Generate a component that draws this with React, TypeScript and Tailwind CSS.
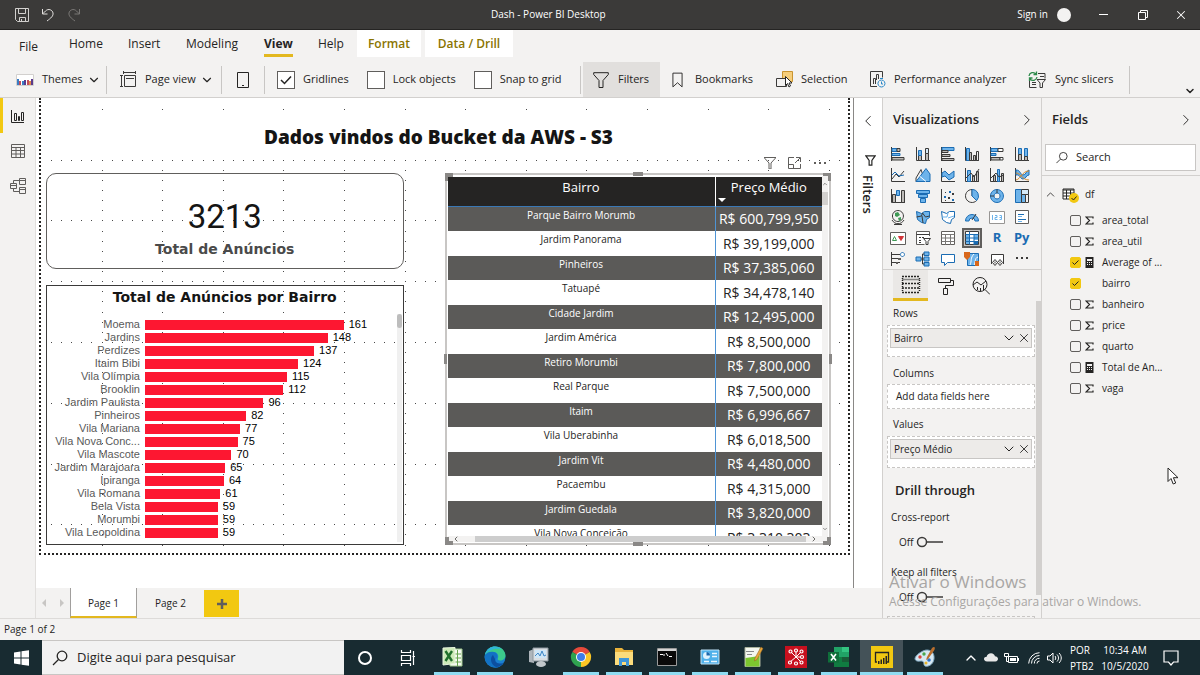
import React from 'react';
import { ChevronDown, ChevronLeft, ChevronRight, ChevronUp, X } from 'lucide-react';

// [path, fill, stroke]
type Stroke = [string, string, string];

interface GlyphProps {
  parts: Stroke[];
  className?: string;
}

const K = '#3b3a39';
const B = '#6db3ea';
const D = '#1b6cb3';
const G = '#bdbbb8';
const N = 'none';

const Glyph: React.FC<GlyphProps> = ({ parts, className = 'size-4' }) => (
  <svg viewBox="0 0 16 16" className={className} aria-hidden="true">
    {parts.map(([d, fill, stroke], i) => (
      <path key={i} d={d} fill={fill} stroke={stroke} />
    ))}
  </svg>
);

const visuals: { name: string; parts: Stroke[] }[] = [
  { name: 'Stacked bar chart', parts: [['M1.5 1v14', N, K], ['M2 2.500h5v3h-5z', B, D], ['M7 2.500h3v3h-3z', G, K], ['M2 7.500h8v2h-8z', B, D], ['M2 11.500h12v2.500h-12z', G, K]] },
  { name: 'Stacked column chart', parts: [['M1.500 1v13.500h13.500', N, K], ['M3.500 9.500h3v5h-3z', G, K], ['M3.500 4.500h3v5h-3z', B, D], ['M10.500 7.500h3v7h-3z', G, K], ['M10.500 2.500h3v5h-3z', '#d6eaf8', K]] },
  { name: 'Clustered bar chart', parts: [['M1.500 1v14', N, K], ['M2 1.500h12v3h-12z', B, D], ['M2 4.500h6v2h-6z', G, K], ['M2 8.500h8v2h-8z', G, K], ['M2 12.500h12v2h-12z', G, K]] },
  { name: 'Clustered column chart', parts: [['M1.500 1v13.500h13.500', N, K], ['M2.500 2.500h3v12h-3z', B, D], ['M5.500 6.500h2v8h-2z', G, K], ['M9.500 9.500h2v5h-2z', G, K], ['M12.500 5.500h2v9h-2z', '#f3f2f1', K]] },
  { name: '100% stacked bar chart', parts: [['M1.500 1v14', N, K], ['M2 2.500h7v3h-7z', B, D], ['M9 2.500h5v3h-5z', '#fff', K], ['M2 7.500h5v2h-5z', B, D], ['M2 11.500h9v2.500h-9z', G, K], ['M11 11.500h3v2.500h-3z', '#fff', K]] },
  { name: '100% stacked column chart', parts: [['M1.500 1v13.500h13.500', N, K], ['M4.500 2.500h3v6h-3z', B, D], ['M4.500 8.500h3v6h-3z', G, K], ['M10.500 2.500h3v8h-3z', B, D], ['M10.500 10.500h3v4h-3z', G, K]] },
  { name: 'Line chart', parts: [['M1.500 1v13.500h13.500', N, K], ['M2 12l4-5 3 3 5-6', N, K], ['M2 8l3-3 4 4 5-1', N, D]] },
  { name: 'Area chart', parts: [['M1 11l5-8.500 4 12h-9z', '#f3f2f1', K], ['M15 14.500V7l-4-5.500-6 8-4 5z', B, D], ['M5 9.500l6 5', N, '#fff']] },
  { name: 'Stacked area chart', parts: [['M1.500 1v13.500h13.500', N, K], ['M2 6l3-2 4 4 5-4v6l-5 3-4-4-3 1z', B, D]] },
  { name: 'Line and stacked column chart', parts: [['M1.500 1v13.500h13.500', N, K], ['M3.500 3.500h3v11h-3z', B, D], ['M8.500 8.500h2v6h-2z', G, K], ['M12.500 4.500h2v10h-2z', G, K], ['M2 11l5-5 3 4 5-8', N, K]] },
  { name: 'Line and clustered column chart', parts: [['M1.500 1v13.500h13.500', N, K], ['M4.500 8.500h2v6h-2z', G, K], ['M8.500 2.500h2v12h-2z', B, D], ['M12.500 6.500h2v8h-2z', G, K], ['M2 11l5-5 3 4 5-2', N, K]] },
  { name: 'Ribbon chart', parts: [['M1.500 1v13.500h13.500', N, K], ['M2 3c5 0 4 5 7 5s3-4 6-5v5c-3 0-3 4-6 4s-3-5-7-4z', B, D], ['M2 13c5-1 6-9 13-9M2 6c5 0 6 7 13 7', N, '#d98a2b']] },
  { name: 'Waterfall chart', parts: [['M1.500 1v13.500h13.500', N, K], ['M2.500 6.500h3v8h-3z', G, K], ['M6.500 2.500h3v5h-3z', B, D], ['M11.500 2.500h3v12h-3z', G, K]] },
  { name: 'Funnel', parts: [['M1.500 2.500h13v3h-13z', B, D], ['M3.500 6.500h9v3h-9z', B, D], ['M5.500 10.500h5v4h-5z', B, D]] },
  { name: 'Scatter chart', parts: [['M1.500 1v13.500h13.500', N, K], ['M4 8h2v2h-2zM9 3h2v2h-2zM12 11h2v2h-2z', D, N], ['M5 4h1v1h-1zM8 9h2v2h-2zM12 5h2v2h-2zM5 12h1v1h-1z', K, N]] },
  { name: 'Pie chart', parts: [['M8 1.500a6.500 6.500 0 1 0 4.600 11.100L8 8z', '#f3f2f1', K], ['M8 1.500a6.500 6.500 0 0 1 4.600 11.100L8 8z', B, D]] },
  { name: 'Donut chart', parts: [['M8 1.500a6.500 6.500 0 1 1-.1 0zM8 5a3 3 0 1 0 .1 0z', B, D], ['M1.500 8h3.500M8 1.500v3.500', N, K]] },
  { name: 'Treemap', parts: [['M1.500 1.500h6v13h-6z', B, D], ['M7.500 1.500h7v5h-7z', '#d6eaf8', K], ['M7.500 6.500h4v8h-4z', B, K], ['M11.500 6.500h3v8h-3z', '#f3f2f1', K]] },
  { name: 'Map', parts: [['M8 1.500a5.500 5.500 0 1 1-.1 0z', '#f3f2f1', K], ['M5 4l3-1 2 3-3 2-2-1zM8 9l3-1 0 3-2 1z', '#3f9a55', N], ['M2 11c3 5 9 5 12 0M8 14v1.500M4 15.500h8', N, K]] },
  { name: 'Filled map', parts: [['M1.500 2.500l5 2 3-2 5 0v6l-3 2-1 4-4-1-4-3z', B, D], ['M1.500 8l5-1 1-3 3 4 4-1M7 7l1 7', N, K]] },
  { name: 'Shape map', parts: [['M1.500 2.500l5 2 3-2 5 0v6l-3 2-1 4-4-1-4-3z', '#fff', D], ['M2 8h5l1-4M8 9l6-2', N, B]] },
  { name: 'Gauge', parts: [['M1.500 12a6.500 6.500 0 0 1 13 0h-3.500a3 3 0 0 0-6 0z', B, D], ['M8 11l4-6', N, K]] },
  { name: 'Card', parts: [['M.5 2.500h15v12h-15z', '#fff', '#979593'], ['M3.500 6v5M6 6.500h2v2h-2v2h2.500M10.500 6.500h2v4h-2M10.500 8.500h2', N, B]] },
  { name: 'Multi-row card', parts: [['M1.500 1.500h13v13h-13z', '#fff', '#605e5c'], ['M4 5.500h6M4 10.500h8', N, D], ['M4 7.500h4M4 12.500h4', N, B]] },
  { name: 'KPI', parts: [['M.5 2.500h15v12h-15z', '#fff', '#605e5c'], ['M2.500 10.500l2-4 2 4z', N, '#3f9a55'], ['M8.500 6.500h5l-2.500 4z', '#d13438', '#d13438']] },
  { name: 'Slicer', parts: [['M14.500 6v-4.500h-13v13h8', '#fff', '#605e5c'], ['M1.500 4.500h13M4 7.500h2M7 7.500h2M4 10.500h2M4 12.500h2', N, K], ['M8.500 8.500h7l-2.500 3v3h-2v-3z', '#fff', K]] },
  { name: 'Table', parts: [['M1.500 1.500h13v13h-13z', '#fff', '#605e5c'], ['M1.500 4.500h13M1.500 8h13M1.500 11.500h13M5.500 4v11M10.500 4v11', N, '#797775']] },
  { name: 'Matrix', parts: [['M1.500 1.500h13v13h-13z', '#fff', K], ['M2 5h3v9h-3zM10 5h4v5h-4z', B, N], ['M10 11h4v3.500h-4z', D, N], ['M1.500 4.500h13M1.500 8h13M1.500 11.500h13M5.500 1.500v13M10 4v11', N, D]] },
  { name: 'R script visual', parts: [] },
  { name: 'Python visual', parts: [] },
  { name: 'Key influencers', parts: [['M1.500 1v14M2 3.500h8M2 7.500h6M2 11.500h5M10 11.500h-3', N, K], ['M12.500 1.500a2 2 0 1 1-.1 0z', '#fff', D], ['M8 7h3v2h-3zM6 11h2v2h-2z', '#605e5c', N]] },
  { name: 'Decomposition tree', parts: [['M1 6h5v4h-5zM9 1h5v3.500h-5zM9 6h5v4h-5zM9 11.500h5v3.500h-5z', B, D], ['M6 8h3M7.500 3v10M7.500 3h2M7.500 13h2', N, K]] },
  { name: 'Q&A', parts: [['M1.500 3.500h13v8h-7l-3 3v-3h-3z', '#fff', D]] },
  { name: 'ArcGIS map', parts: [['M3.500 2.500h11v12h-11z', B, D], ['M6 14c2-4 0-7 4-11M14 6c-4 1-2 6-4 8', N, '#fff'], ['M0 1h6v5l-3 3-3-3zM11 10h4v5h-4z', '#d8671b', N]] },
  { name: 'Power Apps', parts: [['M2.500 13v-9.500h12v9.500', '#fff', K], ['M6 8.500l2.500 3-2.500 3-2.500-3zM11 8.500l2.500 3-2.500 3-2.500-3z', N, K], ['M6 10.500v2M11 10.500v2', N, K]] },
  { name: 'More visuals', parts: [['M2 6h2v2h-2zM7 6h2v2h-2zM12 6h2v2h-2z', K, N]] },
];

const neighbourhoods: [string, number][] = [
  ['Moema', 161], ['Jardins', 148], ['Perdizes', 137], ['Itaim Bibi', 124], ['Vila Olímpia', 115],
  ['Brooklin', 112], ['Jardim Paulista', 96], ['Pinheiros', 82], ['Vila Mariana', 77], ['Vila Nova Conc...', 75],
  ['Vila Mascote', 70], ['Jardim Marajoara', 65], ['Ipiranga', 64], ['Vila Romana', 61], ['Bela Vista', 59],
  ['Morumbi', 59], ['Vila Leopoldina', 59],
];

const prices: [string, string][] = [
  ['Parque Bairro Morumb', 'R$ 600,799,950'],
  ['Jardim Panorama', 'R$ 39,199,000'],
  ['Pinheiros', 'R$ 37,385,060'],
  ['Tatuapé', 'R$ 34,478,140'],
  ['Cidade Jardim', 'R$ 12,495,000'],
  ['Jardim América', 'R$ 8,500,000'],
  ['Retiro Morumbi', 'R$ 7,800,000'],
  ['Real Parque', 'R$ 7,500,000'],
  ['Itaim', 'R$ 6,996,667'],
  ['Vila Uberabinha', 'R$ 6,018,500'],
  ['Jardim Vit', 'R$ 4,480,000'],
  ['Pacaembu', 'R$ 4,315,000'],
  ['Jardim Guedala', 'R$ 3,820,000'],
  ['Vila Nova Conceição', 'R$ 3,310,303'],
];

const fields: { name: string; kind: 'sum' | 'calc' | 'none'; on?: boolean }[] = [
  { name: 'area_total', kind: 'sum' },
  { name: 'area_util', kind: 'sum' },
  { name: 'Average of ...', kind: 'calc', on: true },
  { name: 'bairro', kind: 'none', on: true },
  { name: 'banheiro', kind: 'sum' },
  { name: 'price', kind: 'sum' },
  { name: 'quarto', kind: 'sum' },
  { name: 'Total de An...', kind: 'calc' },
  { name: 'vaga', kind: 'sum' },
];

const TitleBar = () => (
  <header className="relative flex h-[30px] shrink-0 items-center justify-between border-b border-[#252423] bg-[#3b3a39] text-[10px] text-white">
    <div className="flex items-center gap-3 pl-[15px]">
      <button aria-label="Save">
        <svg viewBox="0 0 14 14" className="size-3.5" fill="none" stroke="#d2d0ce">
          <path d="M.5.5h13v13h-11l-2-2zM3.500.5v5h7v-5M4.500 13.500v-4h6v4M6.500 11v2" />
        </svg>
      </button>
      <button aria-label="Undo">
        <svg viewBox="0 0 14 14" className="size-3.5" fill="none" stroke="#e1dfdd">
          <path d="M1.500 1v5h5M1.500 6l3-3c3-3 7-1 7.500 2s-2 5-6 8" />
        </svg>
      </button>
      <button aria-label="Redo">
        <svg viewBox="0 0 14 14" className="size-3.5" fill="none" stroke="#797775">
          <path d="M12.500 1v5h-5M12.500 6l-3-3c-3-3-7-1-7.500 2s2 5 6 8" />
        </svg>
      </button>
    </div>
    <h1 className="absolute left-[491px]">Dash - Power BI Desktop</h1>
    <div className="flex items-center">
      <button className="flex items-center gap-[9px]">
        Sign in
        <span className="size-3.5 rounded-full bg-[#f3f2f1]" />
      </button>
      <button aria-label="Minimize" className="flex w-[59px] justify-center pl-[5px]">
        <span className="h-px w-[9px] bg-white" />
      </button>
      <button aria-label="Restore" className="flex w-[26px] justify-center">
        <svg viewBox="0 0 10 10" className="size-2.5" fill="none" stroke="#fff">
          <path d="M.5 2.500h7v7h-7zM2.500 2.500v-2h7v7h-2" />
        </svg>
      </button>
      <button aria-label="Close" className="mr-[6px] flex w-[38px] justify-center pl-[11px]">
        <X size={14} strokeWidth={1.75} />
      </button>
    </div>
  </header>
);

const MenuTabs = () => (
  <nav className="flex h-8 shrink-0 items-start text-[12px] leading-[28px]">
    <a href="#file" className="w-[69px] pt-[3px] pl-[19px]">File</a>
    <a href="#home" className="w-[59px]">Home</a>
    <a href="#insert" className="w-[58px]">Insert</a>
    <a href="#modeling" className="w-[78px]">Modeling</a>
    <a href="#view" className="w-[54px] font-bold">
      <span className="inline-block h-[27px] border-b-[3px] border-[#e3b81f]">View</span>
    </a>
    <a href="#help" className="w-[39px]">Help</a>
    <a href="#format" className="mr-1 h-[27px] w-16 bg-white text-center font-semibold text-[#8a7400]">Format</a>
    <a href="#drill" className="h-[27px] w-[88px] bg-white text-center font-semibold text-[#8a7400]">Data / Drill</a>
  </nav>
);

const RibbonCheck: React.FC<{ label: string; checked?: boolean }> = ({ label, checked }) => (
  <label className="flex items-center gap-2 whitespace-nowrap">
    <span className="relative size-[18px]">
      <input type="checkbox" defaultChecked={checked} className="peer block size-[18px] appearance-none border border-[#605e5c] bg-white" />
      <svg viewBox="0 0 18 18" className="absolute inset-0 hidden size-[18px] peer-checked:block" fill="none" stroke="#252423">
        <path d="M4 9l3.500 3.500L14 5.500" strokeWidth="1.500" />
      </svg>
    </span>
    {label}
  </label>
);

const Ribbon = () => (
  <div className="relative flex h-9 shrink-0 items-center border-b border-[#d2d0ce] text-[11px] text-[#252423]">
    <button className="flex h-7 w-[107px] items-center border-r border-[#c8c6c4] pl-4">
      <svg viewBox="0 0 18 12" className="mr-2 h-3 w-[18px]">
        <path d="M.5.500h17v11h-17z" fill="#fff" stroke="#d2d0ce" />
        <path d="M1 5h2v6H1zM6 7h2v4H6z" fill="#3b7dc4" />
        <path d="M3 7h2v4H3zM11 6h2v5h-2z" fill="#c24d5c" />
        <path d="M8 6h2v5H8zM15 5h2v6h-2z" fill="#5b3b8c" />
        <path d="M13 7h2v4h-2z" fill="#e08a4c" />
      </svg>
      Themes
      <ChevronDown size={14} strokeWidth={2} className="ml-1" />
    </button>
    <button className="flex h-7 w-[115px] items-center border-r border-[#c8c6c4] pl-[13px]">
      <svg viewBox="0 0 17 17" className="mr-2 size-[17px]" fill="none" stroke="#3b3a39">
        <path d="M4.500 4.500h11v11h-11zM6 7.500h8M3 1.500h13M3.500 0v3M15.500 0v3M1.500 4v12M0 4.500h3M0 15.500h3" />
      </svg>
      Page view
      <ChevronDown size={14} strokeWidth={2} className="ml-1" />
    </button>
    <button aria-label="Mobile layout" className="flex h-7 w-[43px] items-center justify-center border-r border-[#c8c6c4]">
      <svg viewBox="0 0 12 16" className="h-4 w-3" fill="none" stroke="#252423">
        <path d="M.5.500h11v15H.5zM5 13.500h2" />
      </svg>
    </button>
    <div className="flex h-7 w-[316px] items-center gap-[18px] border-r border-[#c8c6c4] pl-3">
      <RibbonCheck label="Gridlines" checked />
      <RibbonCheck label="Lock objects" />
      <RibbonCheck label="Snap to grid" />
    </div>
    <button className="ml-[2px] flex h-[35px] w-[77px] items-center bg-[#e1dfdd] pl-[10px]">
      <svg viewBox="0 0 16 16" className="mr-[9px] size-4" fill="none" stroke="#252423">
        <path d="M.7.7h14.600v1.800L10 8.500v7H6v-7L.7 2.500z" />
      </svg>
      Filters
    </button>
    <button className="flex w-[116px] items-center pl-3">
      <svg viewBox="0 0 12 16" className="mr-3 h-4 w-[11px]" fill="none" stroke="#252423">
        <path d="M1 .5h10v15l-5-4.500-5 4.500z" />
      </svg>
      Bookmarks
    </button>
    <button className="flex w-[94px] items-center">
      <svg viewBox="0 0 17 17" className="mr-2 size-[17px]">
        <path d="M6.500.500h10v10h-10z" fill="#f6ce7a" stroke="#c99430" />
        <path d="M.5 7.500h10v8H.5z" fill="#f3f2f1" stroke="#3b3a39" />
        <path d="M9.500 5.500v9l2-2 1.500 3.500 1.500-1-1.500-3h3z" fill="#fff" stroke="#252423" />
      </svg>
      Selection
    </button>
    <button className="flex w-[158px] items-center">
      <svg viewBox="0 0 17 17" className="mr-[7px] size-[17px]" fill="none" stroke="#3b3a39">
        <path d="M7 15.500H.5V.500h12v6M3.500 13V7.500h2V13M6.500 9V3.500h2V8" />
        <path d="M11.500 9a3.500 3.500 0 1 1-.1 0M11.500 10.500v2.500h1.500M10 7.500h3" stroke="#2b88c8" />
      </svg>
      Performance analyzer
    </button>
    <button className="flex h-7 w-[102px] items-center border-r border-[#c8c6c4]">
      <svg viewBox="0 0 18 18" className="mr-[9px] size-[18px]" fill="none" stroke="#3b3a39">
        <path d="M10 2.500h7M17 2.500v5M12 5.500h4M1.500 10v6.500h7M4 11.500h4M4 13.500h4M9 8.500h8.500l-3 3.500v4.500h-2.500v-4.500z" />
        <path d="M1 5a4 4 0 0 1 7-2M8.500.5v3H5.500M9 6a4 4 0 0 1-7 2M1.500 10V7h3" stroke="#2d8a4b" strokeWidth="1.300" />
      </svg>
      Sync slicers
    </button>
    <button aria-label="Collapse ribbon" className="absolute right-1 bottom-0">
      <ChevronDown size={12} strokeWidth={3} />
    </button>
  </div>
);

const ViewRail = () => (
  <nav className="flex w-9 shrink-0 flex-col border-r border-[#e1dfdd] text-[#3b3a39]">
    <button aria-label="Report" className="flex h-[35px] items-center border-l-[3px] border-[#f2c811] pl-2">
      <svg viewBox="0 0 14 14" className="size-3.5" fill="none" stroke="#252423">
        <path d="M.5 1v12.500H13M3.500 4.500h2v7h-2zM7.500 7.500h1v4h-1zM10.500 3.500h2v8h-2z" />
      </svg>
    </button>
    <button aria-label="Data" className="flex h-[35px] items-center pl-[11px]">
      <svg viewBox="0 0 14 14" className="size-3.5" fill="none" stroke="#605e5c">
        <path d="M.5.500h13v13H.5zM.5 3.500h13M.5 6.500h13M.5 10h13M5 3.500v10M9.500 3.500v10" />
      </svg>
    </button>
    <button aria-label="Model" className="flex h-[36px] items-center pl-[10px]">
      <svg viewBox="0 0 16 16" className="size-4" fill="none" stroke="#605e5c">
        <path d="M.5 5.500h6v5h-6zM.5 7.500h6M9.500.500h6v6h-6zM9.500 2.500h6M9.500 9.500h6v6h-6zM9.500 11.500h6M3.500 5.500v-3h6M3.500 10.500v3h6" />
      </svg>
    </button>
  </nav>
);

const GridDots = () => {
  const dots: [number, number][] = [];
  for (let m = 0; m <= 43; m++) {
    if (m > 0 && m < 5) continue; // the title box hides these
    for (let n = 0; n <= 78; n++) {
      const onColumn = n % 6 === 5;
      const onRow = m % 6 === 5;
      if (onColumn || onRow) dots.push([Math.round(10 + n * 10.1), Math.round(11 + m * 10.13)]);
    }
  }
  return (
    <svg className="pointer-events-none absolute inset-0 size-full" aria-hidden="true">
      {dots.map(([x, y]) => (
        <rect key={`${x}-${y}`} x={x} y={y} width="1" height="1" fill="#4a4a4a" />
      ))}
    </svg>
  );
};

const BarChart = () => (
  <section className="relative flex h-[260px] flex-col border border-[#3b3a39] font-['Liberation_Sans',sans-serif] text-[11px]">
    <h3 className="h-[32px] pt-[2px] text-center font-['DejaVu_Sans',sans-serif] text-[14px] leading-[18px] font-bold text-[#151515]">
      Total de Anúncios por Bairro
    </h3>
    <div className="flex flex-1">
      <ul className="flex-1">
        {neighbourhoods.map(([name, total]) => (
          <li key={name} className="flex h-[13px] items-center leading-[13px]">
            <span className="w-[93px] shrink-0 text-right whitespace-nowrap text-[#5a5a5a]">{name}</span>
            <span className="ml-[5px] flex flex-1 items-center">
              <span className="h-[10px] shrink-0 bg-[#fd1731]" style={{ width: `${(total / 161) * 79}%` }} />
              <span className="ml-[5px] text-black">{total}</span>
            </span>
          </li>
        ))}
      </ul>
      <div className="mt-[-4px] mr-[1px] mb-[2px] w-[5px] bg-[#f0f0f0]">
        <div className="h-[14px] rounded-sm bg-[#bdbdbd]" />
      </div>
    </div>
  </section>
);

const PriceTable = () => (
  <section className="relative h-[372px] border-[2px] border-[#c8c6c4] bg-white p-[1px]">
    <div className="absolute -top-[18px] right-[2px] flex items-center gap-3 text-[#605e5c]">
      <svg viewBox="0 0 12 12" className="size-3" fill="none" stroke="currentColor"><path d="M0 .5h12L7 6v6H5V6z" /></svg>
      <svg viewBox="0 0 13 12" className="h-3 w-[13px]" fill="none" stroke="currentColor"><path d="M6 .5H.5v11h12V7M.5 7.500h5v4M8 .5h4.500V5M12 1L7 6" /></svg>
      <svg viewBox="0 0 14 12" className="h-3 w-3.5" fill="currentColor"><path d="M1 5h2v2H1zM6 5h2v2H6zM11 5h2v2h-2z" /></svg>
    </div>
    <span className="absolute -top-[2px] -left-[2px] size-2 border-t-4 border-l-4 border-[#8a8886]" />
    <span className="absolute -top-[2px] -right-[2px] size-2 border-t-4 border-r-4 border-[#8a8886]" />
    <span className="absolute -bottom-[2px] -left-[2px] size-2 border-b-4 border-l-4 border-[#8a8886]" />
    <span className="absolute -right-[2px] -bottom-[2px] size-2 border-r-4 border-b-4 border-[#8a8886]" />
    <span className="absolute -top-[3px] left-1/2 h-1 w-[10px] -translate-x-1/2 bg-[#8a8886]" />
    <span className="absolute -bottom-[3px] left-1/2 h-1 w-[10px] -translate-x-1/2 bg-[#8a8886]" />
    <span className="absolute top-1/2 -left-[3px] h-[10px] w-[3px] -translate-y-1/2 bg-[#8a8886]" />
    <span className="absolute top-1/2 -right-[3px] h-[10px] w-[3px] -translate-y-1/2 bg-[#8a8886]" />
    <div className="relative flex h-[360px]">
      <div className="flex-1 overflow-hidden pt-[1px]">
        <table className="w-full table-fixed border-separate border-spacing-0 text-center">
          <thead>
            <tr className="h-[30px] bg-[#252423] align-top text-[13px] leading-[20px] text-white">
              <th className="w-[268px] border-r border-b border-r-white border-b-[#3a78b5] p-0 font-normal">Bairro</th>
              <th className="relative border-b border-[#3a78b5] p-0 font-normal">
                Preço Médio
                <span className="absolute bottom-1 left-[2px] border-x-4 border-t-4 border-x-transparent border-t-white" />
              </th>
            </tr>
          </thead>
          <tbody>
            {prices.map(([name, value], i) => (
              <tr key={name} className={i % 2 ? 'h-[25px] bg-white text-[#252423]' : 'h-[24px] bg-[#5b5a58] text-white'}>
                <td className="border-r border-[#4f94d4] p-0 align-top text-[10px] leading-[17px]">{name}</td>
                <td className="p-0 text-[14px] leading-[24px] whitespace-nowrap">{value}</td>
              </tr>
            ))}
          </tbody>
        </table>
      </div>
      <div className="flex w-[6px] flex-col items-center bg-[#f3f2f1]">
        <ChevronUp size={6} className="my-[5px]" />
        <span className="h-[13px] w-full bg-[#d2d0ce]" />
        <ChevronDown size={6} className="mt-auto mb-1" />
      </div>
    </div>
    <div className="flex h-[6px] items-center bg-[#f3f2f1]">
      <ChevronLeft size={8} className="mx-1" />
      <span className="mr-[4px] ml-[11px] h-full flex-1 bg-[#cdcdcd]" />
      <ChevronRight size={8} className="mr-[10px]" />
    </div>
  </section>
);

const ReportCanvas = () => (
  <main className="min-w-0 flex-1 bg-white px-[3px]">
    <div className="relative border-x-2 border-b-2 border-dotted border-[#252423] pr-[17px] pb-2 pl-[5px]">
      <GridDots />
      <h2 className="relative h-[75px] pt-[26px] text-center text-[19px] leading-[26px] font-extrabold text-[#151515]">
        Dados vindos do Bucket da AWS - S3
      </h2>
      <div className="grid grid-cols-[358fr_387fr] gap-[41px]">
        <div className="flex flex-col gap-4">
          <section className="relative flex h-[96px] flex-col items-center rounded-[10px] border border-[#605e5c] pt-[24px]">
            <p className="font-['Roboto',sans-serif] text-[33px] leading-[38px] text-[#151515]">3213</p>
            <p className="font-['DejaVu_Sans',sans-serif] text-[14px] leading-[26px] font-bold text-[#4a4a4a]">Total de Anúncios</p>
          </section>
          <BarChart />
        </div>
        <PriceTable />
      </div>
    </div>
  </main>
);

const PageTabs = () => (
  <div className="flex h-[30px] shrink-0 text-[10px] leading-[30px]">
    <div className="flex w-[34px] items-center justify-between px-[6px]">
      <span className="border-y-4 border-r-4 border-y-transparent border-r-[#c8c6c4]" />
      <span className="border-y-4 border-l-4 border-y-transparent border-l-[#c8c6c4]" />
    </div>
    <button className="w-[67px] border-x border-b-2 border-x-[#a19f9d] border-b-[#e3b81f] bg-white">Page 1</button>
    <button className="w-[67px]">Page 2</button>
    <button aria-label="New page" className="mt-[2px] flex h-[27px] w-[35px] items-center justify-center bg-[#f2c811] text-[#605e5c]">
      <svg viewBox="0 0 10 10" className="size-2.5" stroke="#605e5c" strokeWidth="2.500"><path d="M5 0v10M0 5h10" /></svg>
    </button>
  </div>
);

const FiltersPane = () => (
  <aside className="flex w-[29px] shrink-0 flex-col items-center border-l border-[#8a8886] bg-white pt-[14px]">
    <ChevronLeft size={18} strokeWidth={1.25} />
    <svg viewBox="0 0 12 12" className="mt-[25px] ml-1 size-[11px]" fill="none" stroke="#252423" strokeWidth="1.300">
      <path d="M1 1h10L7.500 6v5h-3V6z" />
    </svg>
    <h2 className="mt-[9px] text-[13px] leading-[18px] font-semibold [writing-mode:vertical-rl]">Filters</h2>
  </aside>
);

const FieldPill: React.FC<{ label: string }> = ({ label }) => (
  <div className="h-8 border border-dashed border-[#c8c6c4] bg-white px-[2px] pt-[2px]">
    <div className="flex h-5 items-center border border-[#c8c6c4] bg-[#edebe9] pl-[3px]">
      <span className="flex-1">{label}</span>
      <button aria-label={`Options for ${label}`}><ChevronDown size={16} strokeWidth={1.5} /></button>
      <button aria-label={`Remove ${label}`}><X size={14} strokeWidth={1.5} /></button>
    </div>
  </div>
);

const Toggle: React.FC<{ label: string }> = ({ label }) => (
  <label className="block">
    <span className="block leading-[16px]">{label}</span>
    <span className="mt-[9px] flex items-center pl-2 leading-[16px]">
      Off
      <input type="checkbox" role="switch" className="sr-only" />
      <svg viewBox="0 0 28 12" className="ml-[2px] h-3 w-7" fill="none" stroke="#3b3a39" strokeWidth="1.500">
        <circle cx="6" cy="6" r="4.500" />
        <path d="M10.500 6H27" />
      </svg>
    </span>
  </label>
);

const VisualizationsPane = () => (
  <aside className="relative flex w-[159px] shrink-0 flex-col overflow-hidden border-l border-[#d2d0ce] text-[10px] text-[#252423]">
    <div className="flex h-[45px] items-center justify-between pr-[5px] pb-[2px] pl-[10px]">
      <h2 className="text-[13px] font-semibold">Visualizations</h2>
      <ChevronRight size={18} strokeWidth={1.25} />
    </div>
    <div className="grid h-[127px] grid-cols-6 border-b border-[#d2d0ce] pr-[7px] pl-[3px]">
      {visuals.map(({ name, parts }) => (
        <button key={name} aria-label={name} className="flex h-[21px] items-center justify-center">
          {name === 'R script visual' && <span className="text-[13px] font-bold text-[#1b6cb3]">R</span>}
          {name === 'Python visual' && <span className="text-[13px] font-bold text-[#1b6cb3]">Py</span>}
          {parts.length > 0 && (
            <span className={name === 'Matrix' ? 'border-2 border-[#605e5c] bg-[#c8c6c4]' : ''}>
              <Glyph parts={parts} />
            </span>
          )}
        </button>
      ))}
    </div>
    <div className="flex h-[31px] pl-[10px]">
      <button aria-label="Fields" className="flex w-[35px] items-center justify-center border-b-[3px] border-[#e3b81f] bg-[#eae8e6]">
        <svg viewBox="0 0 20 20" className="size-5" fill="none" stroke="#252423" strokeWidth="1.500">
          <path d="M1 2.500h18M1 9.500h18M1 14h18M1 18.500h18" strokeDasharray="2 1" />
          <path d="M1.500 5.500h17M1.500 4v14M18.500 4v14" strokeDasharray="1 1" />
        </svg>
      </button>
      <button aria-label="Format" className="flex w-[36px] items-center justify-center">
        <svg viewBox="0 0 16 18" className="h-[18px] w-4" fill="none" stroke="#252423">
          <path d="M.5 1.500h12v4H.5zM12.500 3.500h3v5h-8v3M5.500 11.500h4v6h-4z" />
        </svg>
      </button>
      <button aria-label="Analytics" className="flex w-[34px] items-center justify-center">
        <svg viewBox="0 0 18 18" className="size-[18px]" fill="none" stroke="#252423">
          <circle cx="8" cy="7.500" r="7" />
          <path d="M13 12.500l5 5M1 8l4-3 4 3 5-4M5.500 10v3M8.500 11v3M11.500 8v5" />
        </svg>
      </button>
    </div>
    <div className="flex-1 overflow-hidden pr-[6px] pl-[4px]">
      <h3 className="pt-1 pb-1 pl-[6px] leading-[16px]">Rows</h3>
      <FieldPill label="Bairro" />
      <h3 className="pt-2 pb-[3px] pl-[6px] leading-[16px]">Columns</h3>
      <div className="h-[25px] border border-dashed border-[#c8c6c4] bg-white pl-2 leading-[23px]">Add data fields here</div>
      <h3 className="pt-[7px] pb-[4px] pl-[6px] leading-[16px]">Values</h3>
      <FieldPill label="Preço Médio" />
      <h2 className="pt-[12px] pb-[9px] pl-2 text-[13px] leading-[20px] font-semibold">Drill through</h2>
      <div className="flex flex-col gap-[14px] pl-1">
        <Toggle label="Cross-report" />
        <Toggle label="Keep all filters" />
      </div>
      <div className="mt-[11px] h-4 border border-dashed border-[#c8c6c4]" />
    </div>
    <span className="absolute top-[203px] right-0 bottom-[23px] w-[5px] bg-[#d2d0ce]" />
  </aside>
);

const FieldsPane = () => (
  <aside className="w-[159px] shrink-0 border-l border-[#d2d0ce] text-[10px] text-[#252423]">
    <div className="flex h-[45px] items-center justify-between pr-[5px] pb-[2px] pl-[10px]">
      <h2 className="text-[13px] font-semibold">Fields</h2>
      <ChevronRight size={18} strokeWidth={1.25} />
    </div>
    <div className="border-b border-[#d2d0ce] pt-px pr-1 pb-[4px] pl-[3px]">
      <label className="flex h-[27px] items-center border border-[#c8c6c4] bg-white pl-[10px]">
        <svg viewBox="0 0 14 14" className="mr-2 size-3.5" fill="none" stroke="#252423">
          <circle cx="8.500" cy="5" r="4.500" />
          <path d="M5 8.500L.5 13" />
        </svg>
        <input aria-label="Search" placeholder="Search" className="w-full min-w-0 text-[11px] outline-none placeholder:text-[#252423]" />
      </label>
    </div>
    <div className="flex h-[34px] items-center pt-[3px] pl-[2px]">
      <ChevronUp size={13} strokeWidth={1.5} />
      <svg viewBox="0 0 17 17" className="ml-[5px] size-[17px]" fill="none">
        <path d="M1 3h11v10H1z" fill="#fff" stroke="#252423" />
        <path d="M1 4h11M1 7h11M1 10h11M4.500 4v9M8.500 4v9" stroke="#252423" />
        <circle cx="12" cy="12" r="5" fill="#f2c811" />
        <path d="M9.500 12l2 2 3-3.500" stroke="#252423" />
      </svg>
      <span className="ml-[6px]">df</span>
    </div>
    <ul className="pl-[28px]">
      {fields.map(({ name, kind, on }) => (
        <li key={name}>
          <label className="flex h-[21px] items-center">
            <span className="relative size-[11px]">
              <input
                type="checkbox"
                defaultChecked={on}
                className="peer block size-[11px] appearance-none rounded-[2px] border border-[#605e5c] checked:border-[#f2c811] checked:bg-[#f2c811]"
              />
              <svg viewBox="0 0 11 11" className="absolute inset-0 hidden size-[11px] peer-checked:block" fill="none" stroke="#252423">
                <path d="M2.500 5.500l2 2 4-4" />
              </svg>
            </span>
            <span className="ml-1 flex w-[17px] shrink-0 text-[#252423]">
              {kind === 'sum' && (
                <svg viewBox="0 0 9 9" className="size-[9px]" fill="none" stroke="currentColor" strokeWidth="1.200">
                  <path d="M8 2.500V1H1l3.500 3.500L1 8h7V6.500" />
                </svg>
              )}
              {kind === 'calc' && (
                <svg viewBox="0 0 9 11" className="h-[11px] w-[9px]">
                  <path d="M.5 0h8v11h-8z" fill="#252423" />
                  <path d="M2 2h5v2H2zM2 5h1v1H2zM4 5h1v1H4zM6 5h1v1H6zM2 7h1v1H2zM4 7h1v1H4zM6 7h1v1H6z" fill="#f3f2f1" />
                </svg>
              )}
            </span>
            {name}
          </label>
        </li>
      ))}
    </ul>
  </aside>
);

interface TaskApp {
  name: string;
  open: boolean;
  icon: React.ReactNode;
}

const apps: TaskApp[] = [
  {
    name: 'Excel 2010', open: true,
    icon: <><path d="M9 3h12v17H9z" fill="#f5faf2" stroke="#9cc58a" /><path d="M13 8h7M13 12h7M13 16h7M16.500 4v16" stroke="#65a54e" /><path d="M2 2l12-.5v16L2 19z" fill="#cdeab8" stroke="#e9f6df" /><path d="M4.500 5l6.500 10M11 5L4.500 15" stroke="#20702c" strokeWidth="2.400" /></>,
  },
  {
    name: 'Edge', open: true,
    icon: <><circle cx="11" cy="11" r="10.500" fill="#1b7fd0" /><path d="M1 9C2 3 7 .5 11 .5c7 0 10.500 5 10.500 9 0 3-2.500 5-5.500 5-2 0-3-1-2-2.500C15 9 13 6 9 6c-4 0-7 1.500-8 3z" fill="#3ccb8c" /><path d="M1 9C2 3 7 .5 11 .5c3 0 5 1 6.500 2.500C12 2 5 3 1 9z" fill="#2fb5d8" /><path d="M1 9c2-3 6-4 9-3 3 .7 4 4 2.500 6-2 3 .5 6 4 6l3-1c-3 5-9 6-13 3C2 17.500 0 13 1 9z" fill="#1272c4" /><path d="M9 9c-3 2-3 9 3 12 3 0 6-2 7.500-4-4 1.500-9 0-8.500-4z" fill="#0c4fa0" /></>,
  },
  {
    name: 'Monitor', open: false,
    icon: <><path d="M2 5l5-2v14l-5-1z" fill="#aeb5bb" /><path d="M6 2h15v13H6z" fill="#d9dee2" stroke="#8d979f" /><path d="M8 4h11v8H8z" fill="#cfe6f7" /><path d="M8 10l3-3 2 3 2-5 2 5 2-1" fill="none" stroke="#3e87c6" /><ellipse cx="14" cy="18" rx="5" ry="3" fill="#c1c7cb" /></>,
  },
  {
    name: 'Chrome', open: true,
    icon: <><path d="M11 11L2.300 6a10 10 0 0 1 17.400 0z" fill="#e64a3b" /><path d="M11 11l8.700-5a10 10 0 0 1-8.700 15z" fill="#fbc625" /><path d="M11 11v10A10 10 0 0 1 2.300 6z" fill="#2fa350" /><circle cx="11" cy="11" r="5" fill="#fff" /><circle cx="11" cy="11" r="4" fill="#3f7de8" /></>,
  },
  {
    name: 'Explorer', open: true,
    icon: <><path d="M2 2h7l2 2h9v15H2z" fill="#e9b33b" /><path d="M2 6h18v13H2z" fill="#fbdc7c" /><path d="M6 12h10v8h-3v-4H9v4H6z" fill="#3f97d8" /></>,
  },
  {
    name: 'Command Prompt', open: true,
    icon: <><path d="M1.500 2.500h19v17h-19z" fill="#0a0a0a" stroke="#9a9a9a" /><path d="M2 3h18v2H2z" fill="#d4d4d4" /><path d="M4 8.500h3M8 8v2M10 7l2 3M13 10.500h3" stroke="#fff" /></>,
  },
  {
    name: 'Control Panel', open: true,
    icon: <><path d="M2 4h18v14H2z" fill="#4fb1ea" stroke="#bfe3f8" /><circle cx="7.500" cy="9.500" r="3.500" fill="#dff2fd" /><path d="M7.500 9.500V6a3.500 3.500 0 0 1 3.500 3.500z" fill="#1b66ab" /><path d="M13 7.500h5M13 10.500h5M5 15.500h5M12 15.500h6" stroke="#e9f7ff" strokeWidth="1.500" /></>,
  },
  {
    name: 'Notepad++', open: true,
    icon: <><path d="M3 1.500h15v19H3z" fill="#f4f6ef" stroke="#a9b19c" /><path d="M3.500 12l14-2v10.500h-14z" fill="#7cc62f" /><path d="M4 5.500h8M5 8.500h5" stroke="#888" /><path d="M19 1l2 1.500-6 11-2.500 1.500.5-3z" fill="#e8a53a" stroke="#8d6020" strokeWidth=".5" /></>,
  },
  {
    name: 'XMind', open: true,
    icon: <><path d="M0 0h22v22H0z" fill="#c8101e" /><path d="M11 11L6 6M11 11l5-5M11 11l-6 5M11 11l5 5M11 11V5M11 11h6" stroke="#fff" /><g fill="#c8101e" stroke="#fff" strokeWidth="1.200"><circle cx="5.500" cy="5.500" r="1.500" /><circle cx="11" cy="4.500" r="1.500" /><circle cx="16.500" cy="5.500" r="1.500" /><circle cx="17" cy="11" r="1.500" /><circle cx="11" cy="17.500" r="1.500" /><circle cx="5" cy="16.500" r="1.500" /><circle cx="16.500" cy="16.500" r="1.500" /></g></>,
  },
  {
    name: 'Excel', open: true,
    icon: <><path d="M6 1h15v20H6z" fill="#21a366" /><path d="M6 11h8v5H6zM6 16h15v5H6z" fill="#107c41" /><path d="M14 1h7v5h-7z" fill="#33c481" /><path d="M14 11h7v5h-7z" fill="#185c37" /><path d="M0 6h11v10.500H0z" fill="#0f6f3a" /><path d="M3 8l5 6.500M8 8l-5 6.500" stroke="#fff" strokeWidth="1.600" /></>,
  },
  {
    name: 'Power BI', open: true,
    icon: <><path d="M0 0h22v22H0z" fill="#f2c811" /><path d="M6 16H4.500V6.500h13V16H16" fill="none" stroke="#252423" strokeWidth="1.300" /><path d="M7 15h1.500v3H7zM9.500 13.500H11V18H9.500zM12 12h1.500v6H12zM14.500 10H16v8h-1.500z" fill="#252423" /></>,
  },
  {
    name: 'Paint', open: true,
    icon: <><path d="M9 5c6-3 12 1 11 8-1 6-6 8-9 7-2-1 0-4-3-5-3 0-6 1-7-2 0-3 4-6 8-8z" fill="#d6e8f2" stroke="#7ea7bf" /><circle cx="6" cy="11" r="1.700" fill="#d8453b" /><circle cx="10" cy="8" r="1.700" fill="#4aa84f" /><circle cx="15" cy="14" r="1.800" fill="#2d74c9" /><circle cx="12" cy="17" r="1.500" fill="#e8b62f" /><path d="M18 2c3-3 4 1 1 4l-5 7-2 1 1-3z" fill="#b96f2e" /></>,
  },
];

const Taskbar = () => (
  <footer className="flex h-[35px] shrink-0 items-stretch bg-[#182b31] text-white">
    <button aria-label="Start" className="flex w-[42px] items-center justify-center">
      <svg viewBox="0 0 15 16" className="h-4 w-[15px]" fill="#fff">
        <path d="M0 2.500l6.500-1v6H0zM7.500 1.300L15 .2v7.300H7.500zM0 8.500h6.500v6l-6.500-1zM7.500 8.500H15v7.300l-7.500-1z" />
      </svg>
    </button>
    <label className="flex w-[302px] items-center border-y border-[#c8c6c4] bg-[#f2f2f2] pl-[10px] text-[#252423]">
      <svg viewBox="0 0 16 16" className="mr-[9px] size-4" fill="none" stroke="#252423" strokeWidth="1.300">
        <circle cx="10" cy="6" r="4.800" />
        <path d="M6.500 9.500L1 15" />
      </svg>
      <input aria-label="Pesquisar" placeholder="Digite aqui para pesquisar" className="flex-1 text-[13px] outline-none placeholder:text-[#252423]" />
    </label>
    <button aria-label="Cortana" className="flex w-[42px] items-center justify-center">
      <span className="size-[14px] rounded-full border-2 border-white" />
    </button>
    <button aria-label="Task view" className="flex w-[44px] items-center justify-center">
      <svg viewBox="0 0 16 16" className="size-4" fill="none" stroke="#fff">
        <path d="M1.500 0v2.500h9V0M1.500 5.500h9v5h-9zM1.500 16v-2.500h9V16M13.500 1v14M12.500 6.500h2.500" strokeWidth="1.200" />
      </svg>
    </button>
    {apps.map(({ name, open, icon }) => (
      <button
        key={name}
        aria-label={name}
        className={`flex w-[43px] flex-col items-center justify-between pt-[6px] ${name === 'Power BI' ? 'bg-[#445258]' : ''}`}
      >
        <svg viewBox="0 0 22 22" className="size-[22px]" fill="none">{icon}</svg>
        {open && <span className={`h-[3px] bg-[#8fdcf2] ${name === 'Power BI' ? 'w-full' : 'w-9'}`} />}
      </button>
    ))}
    <div className="ml-auto flex items-center">
      <ChevronUp size={16} strokeWidth={2} className="mr-[5px]" />
      <svg viewBox="0 0 16 10" className="mr-[6px] h-[9px] w-[14px]" fill="#e8e8e8">
        <path d="M3.500 9.500C1 9.500 0 8 0 6.500S1.500 4 3 4c.5-2.500 2.500-4 5-4s4 1.500 4.500 3.500C14.500 3.500 16 5 16 6.500s-1 3-3 3z" />
      </svg>
      <svg viewBox="0 0 15 12" className="mr-[9px] h-3 w-[15px]" fill="none" stroke="#fff">
        <path d="M4.500 4.500h9v6h-9zM14.500 6v3M.5 1.500h4v3h-4zM2.500 4.500v5h2" />
        <path d="M6 6h6v3H6z" fill="#fff" stroke="none" />
      </svg>
      <svg viewBox="0 0 12 12" className="mr-[7px] size-3" fill="none" stroke="#fff">
        <path d="M.7 11.500A11 11 0 0 1 11.500.7M3.500 11.500a8 8 0 0 1 8-8M6.300 11.500a5 5 0 0 1 5.200-5.200M9 11.500a2.500 2.500 0 0 1 2.500-2.500" />
      </svg>
      <svg viewBox="0 0 15 14" className="mr-[8px] h-3.5 w-[15px]" fill="none" stroke="#fff">
        <path d="M.5 5h2.500l3-3v10l-3-3H.5zM8 5c1 1 1 3 0 4M10 3.500c2 2 2 5 0 7M12 2c3 3 3 7 0 10" />
      </svg>
      <div className="w-[30px] text-[10px] leading-[16px]">
        <p>POR</p>
        <p>PTB2</p>
      </div>
      <div className="w-[50px] text-center text-[10px] leading-[16px] whitespace-nowrap">
        <p>10:34 AM</p>
        <p>10/5/2020</p>
      </div>
      <svg viewBox="0 0 16 16" className="mr-[21px] ml-[13px] size-4" fill="none" stroke="#fff" strokeWidth="1.200">
        <path d="M1 1h14v11h-4.500L8 15l-2.500-3H1z" />
      </svg>
    </div>
  </footer>
);

const App: React.FC = () => {
  return (
    <div className="relative flex h-screen flex-col overflow-hidden bg-[#f3f2f1] font-['Open_Sans',sans-serif] text-[#252423]">
      <TitleBar />
      <MenuTabs />
      <Ribbon />
      <div className="flex min-h-0 flex-1 border-b border-[#dddbd9]">
        <ViewRail />
        <div className="flex min-w-0 flex-1 flex-col">
          <div className="flex min-h-0 flex-1">
            <ReportCanvas />
            <FiltersPane />
          </div>
          <PageTabs />
        </div>
        <VisualizationsPane />
        <FieldsPane />
      </div>
      <div className="h-[21px] shrink-0 pl-1 text-[10px] leading-[20px]">Page 1 of 2</div>
      <Taskbar />

      {/* activation notice floats above every window */}
      <div className="pointer-events-none absolute right-[47px] bottom-[64px] w-[264px] whitespace-nowrap text-[#a8a6a4]">
        <p className="text-[17px] leading-[22px]">Ativar o Windows</p>
        <p className="text-[12px] leading-[18px]">Acesse Configurações para ativar o Windows.</p>
      </div>
      <svg viewBox="0 0 12 18" className="pointer-events-none absolute right-[21px] bottom-[190px] h-[18px] w-3" fill="#fff" stroke="#252423">
        <path d="M1 1v13.500l3-3 2.200 5.500 2.500-1-2.300-5.300H11z" />
      </svg>
    </div>
  );
};

export default App;
